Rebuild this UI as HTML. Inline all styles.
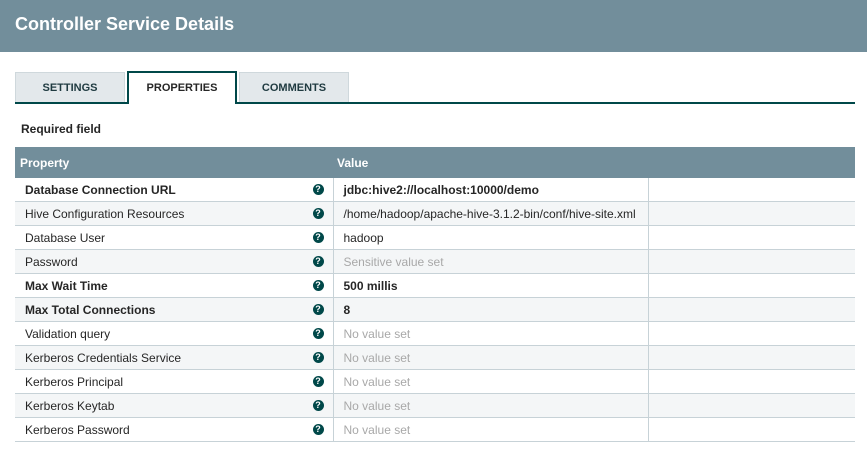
<!DOCTYPE html><html><head><style>
body{margin:0;width:867px;height:451px;background:#fff;font-family:"Liberation Sans",sans-serif;overflow:hidden;position:relative}
.hd{position:absolute;left:0;top:0;width:867px;height:52px;background:#728e9b;color:#fff;font-weight:bold;font-size:18px;line-height:48px;padding-left:15px;box-sizing:border-box}
.tab{position:absolute;top:72px;height:31px;width:108px;background:#e3e8eb;border:1px solid #cfd8dc;border-bottom:none;font-size:11px;color:#1f3a40;text-align:center;line-height:31px;font-weight:bold}
.line{position:absolute;left:15px;top:102px;width:840px;height:2px;background:#004849}
.tab.act{background:#fff;border:2px solid #004849;border-bottom:none;height:31px;top:71px;z-index:2;width:106px;color:#262626}
.req{position:absolute;left:21px;top:122px;font-size:12px;font-weight:bold;color:#262626}
table{position:absolute;left:15px;top:147px;width:840px;border-collapse:collapse;font-size:12px;color:#262626}
th{background:#728e9b;color:#fff;text-align:left;height:31px;padding:0 0 0 5px;font-size:12px}
td{height:23px;border-bottom:1px solid #c7d2d7;padding:0;position:relative}
tr:nth-child(odd) td{background:#f4f6f7}
td.p{width:318px;padding-left:10px;box-sizing:border-box}
td.v{width:315px;border-left:1px solid #c7d2d7;border-right:1px solid #c7d2d7;padding-left:10px;box-sizing:border-box}
.b{font-weight:bold}.g{color:#a8a8a8}
.q{position:absolute;right:9px;top:6px;width:11px;height:11px;border-radius:50%;background:#004849;color:#fff;font-size:9px;font-weight:bold;line-height:11px;text-align:center}
</style></head><body>
<div class="hd">Controller Service Details</div>
<div class="tab" style="left:15px">SETTINGS</div>
<div class="tab act" style="left:127px">PROPERTIES</div>
<div class="tab" style="left:239px">COMMENTS</div>
<div class="line"></div>
<div class="req">Required field</div>
<table>
<tr><th>Property</th><th style="padding-left:4px">Value</th><th></th></tr>
<tr><td class="p b">Database Connection URL<span class="q">?</span></td><td class="v b">jdbc:hive2://localhost:10000/demo</td><td></td></tr>
<tr><td class="p">Hive Configuration Resources<span class="q">?</span></td><td class="v">/home/hadoop/apache-hive-3.1.2-bin/conf/hive-site.xml</td><td></td></tr>
<tr><td class="p">Database User<span class="q">?</span></td><td class="v">hadoop</td><td></td></tr>
<tr><td class="p">Password<span class="q">?</span></td><td class="v g">Sensitive value set</td><td></td></tr>
<tr><td class="p b">Max Wait Time<span class="q">?</span></td><td class="v b">500 millis</td><td></td></tr>
<tr><td class="p b">Max Total Connections<span class="q">?</span></td><td class="v b">8</td><td></td></tr>
<tr><td class="p">Validation query<span class="q">?</span></td><td class="v g">No value set</td><td></td></tr>
<tr><td class="p">Kerberos Credentials Service<span class="q">?</span></td><td class="v g">No value set</td><td></td></tr>
<tr><td class="p">Kerberos Principal<span class="q">?</span></td><td class="v g">No value set</td><td></td></tr>
<tr><td class="p">Kerberos Keytab<span class="q">?</span></td><td class="v g">No value set</td><td></td></tr>
<tr><td class="p">Kerberos Password<span class="q">?</span></td><td class="v g">No value set</td><td></td></tr>
</table>
</body></html>
